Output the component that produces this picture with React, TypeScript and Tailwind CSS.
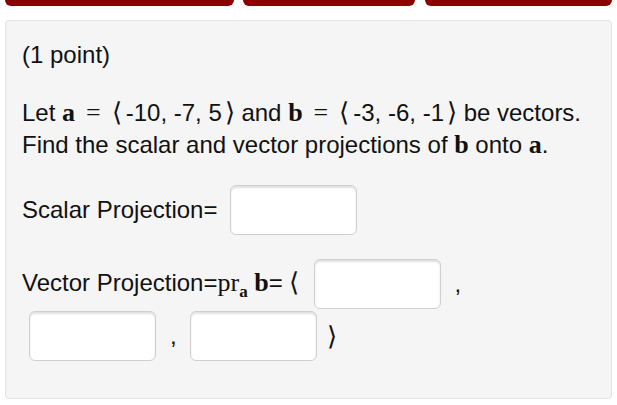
const AnswerBox = () => (
  <div className="w-[127px] h-[50px] bg-white border border-[#cfcfcf] rounded-[6px] shadow-[inset_0_2px_2px_rgba(0,0,0,0.12)]" />
);

const Bold = ({ children }: { children: React.ReactNode }) => (
  <span className="font-['Liberation_Serif',serif] font-bold text-[26px]">{children}</span>
);

const Serif = ({ children }: { children: React.ReactNode }) => (
  <span className="font-['Liberation_Serif',serif] text-[26px]">{children}</span>
);

const Eq = () => <span className="font-['Liberation_Serif',serif] text-[26px] mx-[11px]">=</span>;
const Open = () => <span className="font-['Liberation_Serif',serif] text-[26px] mr-[4px]">⟨</span>;
const Close = () => <span className="font-['Liberation_Serif',serif] text-[26px] ml-[3px]">⟩</span>;

export default function App() {
  return (
    <div className="w-[617px] h-[405px] bg-white font-['Liberation_Sans',Arial,sans-serif] text-[#111] text-[24px] overflow-hidden">
      {/* top tab bars */}
      <div className="flex pl-[5px] h-[6px]">
        <div className="w-[229px] bg-[#8b0000] rounded-b-[6px]" />
        <div className="w-[172px] ml-[9px] bg-[#8b0000] rounded-b-[6px]" />
        <div className="w-[187px] ml-[10px] bg-[#8b0000] rounded-b-[6px]" />
      </div>

      {/* problem panel */}
      <div className="mt-[14px] ml-[5px] w-[607px] h-[379px] bg-[#f5f5f5] border border-[#e3e3e3] rounded-[4px] pl-[16px] pt-[18px]">
        <p className="leading-[32px] h-[32px]">(1 point)</p>

        <p className="leading-[32px] h-[32px] mt-[26px] whitespace-nowrap">
          Let <Bold>a</Bold><Eq /><Open />-10, -7, 5<Close /> and <Bold>b</Bold><Eq />
          <Open />-3, -6, -1<Close /> be vectors.
        </p>
        <p className="leading-[32px] h-[32px] whitespace-nowrap">
          Find the scalar and vector projections of <Bold>b</Bold> onto <Bold>a</Bold>.
        </p>

        <div className="flex items-center mt-[24px]">
          <span className="mr-[13px]">Scalar Projection=</span>
          <AnswerBox />
        </div>

        <div className="flex items-center mt-[24px]">
          <span className="whitespace-nowrap leading-[32px]">
            Vector Projection=<Serif>pr</Serif>
            <span className="font-['Liberation_Serif',serif] font-bold text-[17px] relative top-[6px]">a</span>{" "}
            <Bold>b</Bold>= <Serif>⟨</Serif>
          </span>
          <div className="ml-[15px]">
            <AnswerBox />
          </div>
          <span className="ml-[13px]">,</span>
        </div>

        <div className="flex items-center mt-[2px] pl-[7px]">
          <AnswerBox />
          <span className="ml-[14px] mr-[13px]">,</span>
          <AnswerBox />
          <Serif>
            <span className="ml-[10px]">⟩</span>
          </Serif>
        </div>
      </div>
    </div>
  );
}
